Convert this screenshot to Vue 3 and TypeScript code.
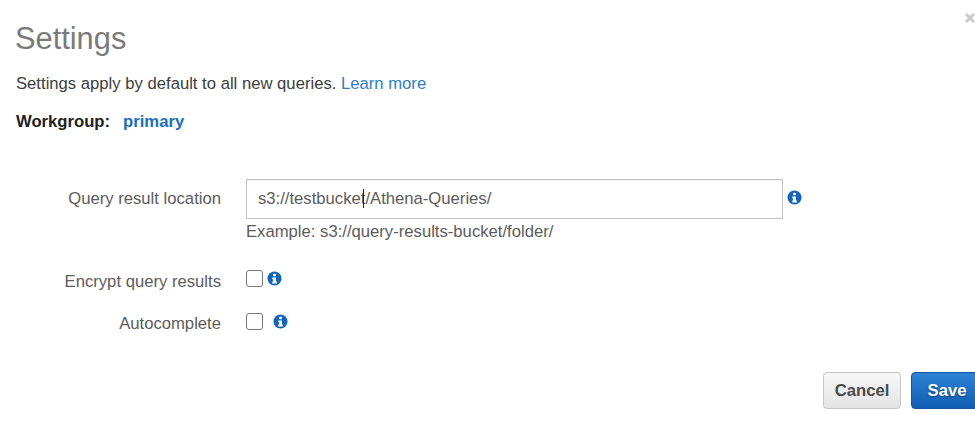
<script setup lang="ts">
const location = 's3://testbucket/Athena-Queries/'
const caretAt = 15
</script>

<template>
  <div class="modal">
    <button class="close" aria-label="Close">
      <svg width="12" height="12" viewBox="0 0 12 12"><path d="M2 2 10 10M10 2 2 10" stroke="#c9c9c9" stroke-width="3" /></svg>
    </button>
    <h2 class="title">Settings</h2>
    <p class="intro">Settings apply by default to all new queries. <a class="link">Learn more</a></p>
    <p class="workgroup"><strong>Workgroup:</strong><a class="wg-name">primary</a></p>

    <div class="form">
      <div class="row row-location">
        <label class="label">Query result location</label>
        <div class="field">
          <div class="input-line">
            <div class="input">{{ location.slice(0, caretAt) }}<span class="caret"></span>{{ location.slice(caretAt) }}</div>
            <svg class="info info-location" viewBox="0 0 16 16"><use href="#info-icon" /></svg>
          </div>
          <div class="hint">Example: s3://query-results-bucket/folder/</div>
        </div>
      </div>

      <div class="row row-encrypt">
        <label class="label">Encrypt query results</label>
        <div class="check-wrap">
          <span class="check"></span>
          <svg class="info info-encrypt" viewBox="0 0 16 16"><use href="#info-icon" /></svg>
        </div>
      </div>

      <div class="row row-auto">
        <label class="label">Autocomplete</label>
        <div class="check-wrap">
          <span class="check"></span>
          <svg class="info info-auto" viewBox="0 0 16 16"><use href="#info-icon" /></svg>
        </div>
      </div>
    </div>

    <footer class="footer">
      <button class="btn btn-cancel">Cancel</button>
      <button class="btn btn-save">Save</button>
    </footer>

    <svg class="defs" width="0" height="0">
      <symbol id="info-icon" viewBox="0 0 16 16">
        <circle cx="8" cy="8" r="7.5" fill="#1166bb" />
        <rect x="6.6" y="2.8" width="2.9" height="2.7" rx="0.6" fill="#fff" />
        <path d="M5.6 6.8H9.5V11.3H10.5V13.2H5.6V11.3H6.6V8.7H5.6Z" fill="#fff" />
      </symbol>
    </svg>
  </div>
</template>

<style scoped>
.modal {
  position: relative;
  width: 975px;
  height: 423px;
  overflow: hidden;
  box-sizing: border-box;
  padding: 21px 0 0 16px;
  background: #fff;
  font-family: "Liberation Sans", Arial, sans-serif;
  font-size: 16.67px;
  color: #333;
}

.close {
  position: absolute;
  top: 12px;
  right: -1px;
  width: 12px;
  height: 12px;
  padding: 0;
  border: 0;
  background: none;
  display: flex;
}

.title {
  margin: 0 0 0 -1px;
  font-size: 30.8px;
  line-height: 36px;
  font-weight: 400;
  color: #7a7a7a;
}

.intro {
  margin: 17px 0 0;
  line-height: 20px;
  color: #3d3d3d;
}

.link {
  color: #2f7dca;
}

.workgroup {
  margin: 18px 0 0;
  line-height: 20px;
}

.workgroup strong {
  color: #222;
}

.wg-name {
  margin-left: 13px;
  font-weight: 700;
  color: #1a6fc0;
}

.form {
  margin-top: 47px;
}

.row {
  display: flex;
}

.label {
  width: 205px;
  flex: none;
  text-align: right;
  color: #5c5c5c;
  line-height: 20px;
}

.field {
  margin-left: 25px;
}

.row-location .label {
  margin-top: 10px;
}

.input-line {
  display: flex;
  align-items: center;
}

.input {
  position: relative;
  box-sizing: border-box;
  width: 537px;
  height: 40px;
  padding-left: 11px;
  border: 1px solid #c4c4c4;
  box-shadow: inset 0 1px 1px rgba(0, 0, 0, 0.06);
  line-height: 38px;
  color: #5c5c5c;
  white-space: pre;
}

.caret {
  display: inline-block;
  width: 1px;
  height: 19px;
  margin: 0 1px 0 -2px;
  background: #222;
  vertical-align: -4px;
}

.hint {
  margin-top: 3px;
  line-height: 20px;
  color: #5c5c5c;
}

.info {
  display: block;
  flex: none;
  width: 15px;
  height: 15px;
}

.info-location {
  margin: -4px 0 0 4px;
}

.row-encrypt {
  margin-top: 30px;
}

.row-auto {
  margin-top: 22px;
}

.check-wrap {
  display: flex;
  align-items: center;
  margin-left: 25px;
  height: 20px;
}

.row-encrypt .check-wrap {
  margin-top: -4px;
}

.row-auto .check-wrap {
  margin-top: -3px;
}

.check {
  box-sizing: border-box;
  width: 17px;
  height: 17px;
  border: 1px solid #767676;
  border-radius: 3px;
  background: #fff;
}

.info-encrypt {
  margin-left: 4px;
}

.info-auto {
  margin-left: 10px;
}

.footer {
  position: absolute;
  right: 0;
  bottom: 14px;
  display: flex;
  gap: 10px;
  transform: translateX(10px);
}

.btn {
  height: 37px;
  padding: 0;
  border-radius: 4px;
  font-family: inherit;
  font-size: 16.67px;
  font-weight: 700;
}

.btn-cancel {
  width: 78px;
  border: 1px solid #c6c6c6;
  background: linear-gradient(#f7f7f7, #e4e4e4);
  color: #4a4a4a;
}

.btn-save {
  width: 74px;
  padding-right: 2px;
  border: 1px solid #15559f;
  background: linear-gradient(#2d82d6, #0f5fb5);
  color: #fff;
  text-shadow: 0 1px 2px rgba(0, 0, 0, 0.4);
}

.defs {
  position: absolute;
}
</style>
